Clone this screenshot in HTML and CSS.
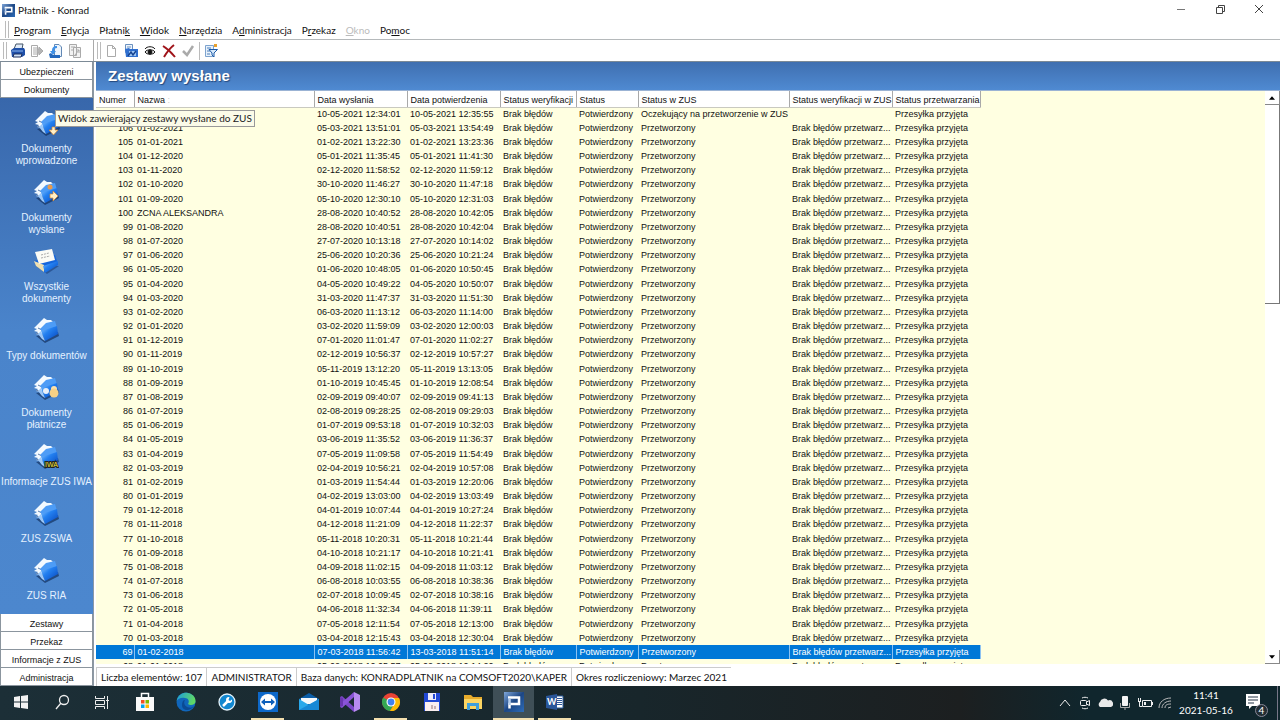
FILE: index.html
```html
<!DOCTYPE html>
<html lang="pl">
<head>
  <meta charset="UTF-8" />
  <meta name="viewport" content="width=device-width, initial-scale=1.0"/>
  <title>Płatnik - Konrad</title>
  <link rel="stylesheet" href="styles.css">
</head>
<body>
  <!-- shared shapes -->
  <svg class="defs" width="0" height="0" aria-hidden="true">
    <defs>
      <linearGradient id="blueFace" x1="0" y1="0" x2="1" y2="1">
        <stop offset="0" stop-color="#8fcaff"/>
        <stop offset="0.4" stop-color="#2380f0"/>
        <stop offset="1" stop-color="#0544bc"/>
      </linearGradient>
      <linearGradient id="pFace" x1="0" y1="0" x2="1" y2="1">
        <stop offset="0" stop-color="#7fa6d8"/>
        <stop offset="0.5" stop-color="#1c4684"/>
        <stop offset="1" stop-color="#2e6cb8"/>
      </linearGradient>
      <linearGradient id="edgeFace" x1="0" y1="0" x2="1" y2="0.3">
        <stop offset="0" stop-color="#1a9be0"/>
        <stop offset="1" stop-color="#5fd765"/>
      </linearGradient>
      <symbol id="folder" viewBox="0 0 26 26">
        <path d="M3 19 12 26 26 19 25 15Z" fill="#12305f" opacity=".7"/>
        <path d="M1 11 11 1 14 3 18 3 22 7 8 18 3 17 5 15 1 14 4 12Z" fill="#f4faff"/>
        <path d="M3 16 8 18M5 11 9 13" stroke="#5b7cab" stroke-width="1"/>
        <path d="M7 12 13 6 22 4 24 11 10 16Z" fill="#4d9cf6"/>
        <path d="M8 14 24 9 25 17 12 24Z" fill="url(#blueFace)"/>
        <path d="M5 17 8 14 12 24 9 22Z" fill="#9cc8f8"/>
      </symbol>
      <symbol id="logoP" viewBox="0 0 20 20">
        <rect width="20" height="20" fill="url(#pFace)"/>
        <path d="M5.500 16.500V12H15V5.500H4" fill="none" stroke="#fff" stroke-width="2.500"/>
        <path d="M5.500 6V13" stroke="#b9cfec" stroke-width="2.500"/>
      </symbol>
    </defs>
  </svg>

  <div class="window">
    <header class="titlebar">
      <svg class="title-icon" viewBox="0 0 20 20"><use href="#logoP"/></svg>
      <h1>Płatnik - Konrad</h1>
      <div class="window-buttons">
        <button type="button" aria-label="Minimalizuj"><svg viewBox="0 0 10 10"><path d="M1 5.500H9" stroke="#777"/></svg></button>
        <button type="button" aria-label="Przywróć"><svg viewBox="0 0 10 10"><path d="M1.500 3.500H7.500V9.500H1.500ZM3.500 3.500V1.500H9.500V7.500H7.500" fill="none" stroke="#444"/></svg></button>
        <button type="button" aria-label="Zamknij"><svg viewBox="0 0 10 10"><path d="M1 1 9 9M9 1 1 9" stroke="#444"/></svg></button>
      </div>
    </header>

    <nav class="menu">
      <span class="grip"></span>
      <button type="button"><u>P</u>rogram</button>
      <button type="button"><u>E</u>dycja</button>
      <button type="button">Płatni<u>k</u></button>
      <button type="button"><u>W</u>idok</button>
      <button type="button"><u>N</u>arzędzia</button>
      <button type="button">A<u>d</u>ministracja</button>
      <button type="button">P<u>r</u>zekaz</button>
      <button type="button" disabled><u>O</u>kno</button>
      <button type="button">Po<u>m</u>oc</button>
    </nav>

    <div class="toolbar">
      <div class="tools tools-left">
        <span class="grip"></span>
        <button type="button" aria-label="Drukuj">
          <svg viewBox="0 0 16 16"><path d="M4 6 6 1H13L12 6" fill="#dfeaf8" stroke="#456"/><path d="M1 7 4 5H14L15 7V12L12 14H2Z" fill="#1f4fa8"/><path d="M2 8H13" stroke="#8db8f0"/><path d="M4 11H12L11 14H3Z" fill="#cfe0f5" stroke="#1c2f5c"/></svg>
        </button>
        <button type="button" aria-label="Eksport">
          <svg viewBox="0 0 16 16" fill="none" stroke="#aaa"><path d="M2.500 2.500H8.500V13.500H2.500ZM4 5H8M4 7H7M4 9H7M4 11H8"/><path d="M8 6H10V4L14 8 10 12V10H8Z" fill="#b5b5b5"/></svg>
        </button>
        <button type="button" aria-label="Import">
          <svg viewBox="0 0 16 16"><path d="M6.500 1.500H11L13.500 4V13.500H6.500Z" fill="#edf5fd" stroke="#6288b5"/><path d="M1 11 3 10 5 12H12V15H2Z" fill="#2368bd"/><path d="M9 3C5 3 4 5 4 8H2L5 12 8 8H6C6 6 7 5 9 5Z" fill="#3f91e8"/></svg>
        </button>
        <button type="button" aria-label="Kopiuj">
          <svg viewBox="0 0 16 16" fill="none" stroke="#aaa"><path d="M2.500 1.500H9.500V12.500H2.500ZM6.500 4.500H13.500V14.500H6.500Z" fill="#f2f2f2"/><path d="M4 4H8M4 7H6M8 12 12 7M9 7H12V10"/></svg>
        </button>
      </div>
      <div class="tools">
        <span class="grip"></span>
        <button type="button" aria-label="Nowy">
          <svg viewBox="0 0 16 16"><path d="M3.500 2.500H8.500L11.500 5.500V13.500H3.500ZM8.500 2.500V5.500H11.500" fill="#fff" stroke="#aaa"/></svg>
        </button>
        <button type="button" aria-label="Otwórz">
          <svg viewBox="0 0 16 16"><path d="M2.500 1.500H9.500V9.500H2.500Z" fill="#edf4fc" stroke="#6b91bf"/><path d="M4 4H8" stroke="#6b91bf"/><path d="M2 6 6 5 7 6H15V14H3Z" fill="#2f6fd0"/><path d="M6 8H13V13H6Z" fill="#9cc6f5"/><path d="M5 13 8 9 10 12 13 8" stroke="#164391" stroke-width="1.500" fill="none"/></svg>
        </button>
        <button type="button" aria-label="Podgląd">
          <svg viewBox="0 0 16 16" fill="none" stroke="#111"><path d="M3 6C5 3 11 3 13 6M3 9C5 6 11 6 13 9 11 12 5 12 3 9"/><circle cx="8" cy="9" r="2" fill="#111"/></svg>
        </button>
        <button type="button" aria-label="Usuń">
          <svg viewBox="0 0 16 16" fill="none" stroke="#a0141a" stroke-width="2"><path d="M2 3C7 6 10 9 14 14M13 2C9 5 6 9 3 14"/></svg>
        </button>
        <button type="button" aria-label="Zatwierdź">
          <svg viewBox="0 0 16 16" fill="none" stroke="#aaa" stroke-width="2.500"><path d="M3 8 7 12 13 3"/></svg>
        </button>
        <span class="separator"></span>
        <button type="button" aria-label="Filtr">
          <svg viewBox="0 0 16 16"><path d="M2.500 2.500H10.500V13.500H2.500Z" fill="#e8f2fc" stroke="#7da3ce"/><path d="M4 5H8M4 8H7M4 11H7" stroke="#4d7fb8"/><path d="M6 6.500H14.500L11 10V14L9 12V10Z" fill="#d5e9fc" stroke="#1d5ba8"/><path d="M11 1H14V4H11Z" fill="#eaa12d"/></svg>
        </button>
      </div>
    </div>

    <div class="workspace">
      <aside class="sidebar">
        <button type="button" class="section">Ubezpieczeni</button>
        <button type="button" class="section">Dokumenty</button>
        <div class="shortcuts">
          <button type="button" class="shortcut">
            <svg viewBox="0 0 26 26"><use href="#folder"/><path d="M18 17H21V20H24L19.500 25 15 20H18Z" fill="#fff0c8" stroke="#d88a30" stroke-width=".7"/></svg>
            Dokumenty<br>wprowadzone
          </button>
          <button type="button" class="shortcut">
            <svg viewBox="0 0 26 26"><use href="#folder"/><circle cx="17" cy="8" r="2.500" fill="#e99a4c"/><path d="M17 15H20V12L25 17 20 22V19H17Z" fill="#fff0c8" stroke="#d88a30" stroke-width=".7"/></svg>
            Dokumenty<br>wysłane
          </button>
          <button type="button" class="shortcut">
            <svg viewBox="0 0 26 26"><path d="M3 18 14 26 26 18Z" fill="#1c3f78" opacity=".6"/><path d="M1 13 22 7 25 16 11 24Z" fill="#1565dc"/><path d="M1 13 11 17 11 24 3 18Z" fill="#f0e0b0"/><path d="M2 4 19 1 22 12 6 16Z" fill="#fbfbf5"/><path d="M8 7 16 5M8 10 17 8" stroke="#aaa" stroke-dasharray="2 1"/><path d="M10 18 25 13 25 17 12 25Z" fill="url(#blueFace)"/></svg>
            Wszystkie<br>dokumenty
          </button>
          <button type="button" class="shortcut">
            <svg viewBox="0 0 26 26"><use href="#folder"/></svg>
            Typy dokumentów
          </button>
          <button type="button" class="shortcut">
            <svg viewBox="0 0 26 26"><use href="#folder"/><circle cx="13" cy="17" r="3" fill="#e8eff8"/><circle cx="21" cy="15" r="3" fill="#fbe2ae"/><circle cx="21" cy="19" r="4.500" fill="#f7d185"/></svg>
            Dokumenty<br>płatnicze
          </button>
          <button type="button" class="shortcut">
            <svg viewBox="0 0 26 26"><use href="#folder"/><text class="iwa" x="12" y="24">IWA</text></svg>
            Informacje ZUS IWA
          </button>
          <button type="button" class="shortcut">
            <svg viewBox="0 0 26 26"><use href="#folder"/></svg>
            ZUS ZSWA
          </button>
          <button type="button" class="shortcut">
            <svg viewBox="0 0 26 26"><use href="#folder"/></svg>
            ZUS RIA
          </button>
        </div>
        <button type="button" class="section">Zestawy</button>
        <button type="button" class="section">Przekaz</button>
        <button type="button" class="section">Informacje z ZUS</button>
        <button type="button" class="section">Administracja</button>
        <div class="tooltip" role="tooltip">Widok zawierający zestawy wysłane do ZUS</div>
      </aside>

      <main class="content">
        <h2>Zestawy wysłane</h2>
        <div class="list">
          <div class="list-body">
            <table>
              <colgroup>
                <col class="c-nr"><col class="c-name"><col class="c-sent"><col class="c-conf"><col class="c-ver">
                <col class="c-status"><col class="c-zus"><col class="c-verzus"><col class="c-proc">
              </colgroup>
              <thead>
                <tr>
                  <th>Numer</th>
                  <th>Nazwa <span class="sort">:</span></th>
                  <th>Data wysłania</th>
                  <th>Data potwierdzenia</th>
                  <th>Status weryfikacji</th>
                  <th>Status</th>
                  <th>Status w ZUS</th>
                  <th>Status weryfikacji w ZUS</th>
                  <th>Status przetwarzania</th>
                </tr>
              </thead>
              <tbody id="rows"></tbody>
            </table>
          </div>
          <div class="scrollbar">
            <button type="button" class="scroll-btn" aria-label="W górę"><svg viewBox="0 0 7 4"><path d="M0 4 3.500 0 7 4Z"/></svg></button>
            <div class="thumb"></div>
            <button type="button" class="scroll-btn" aria-label="W dół"><svg viewBox="0 0 7 4"><path d="M0 0 3.500 4 7 0Z"/></svg></button>
          </div>
        </div>
        <footer class="statusbar">
          <span>Liczba elementów: 107</span>
          <span>ADMINISTRATOR</span>
          <span>Baza danych: KONRADPLATNIK na COMSOFT2020\KAPER</span>
          <span>Okres rozliczeniowy: Marzec 2021</span>
        </footer>
      </main>
    </div>
  </div>

  <div class="taskbar">
    <button type="button" aria-label="Start"><svg viewBox="0 0 20 20" fill="#f2f2f2"><path d="M2 5 8 4V9.500H2ZM9 4 16 3V9.500H9ZM2 10.500H8V16L2 15ZM9 10.500H16V17L9 16Z"/></svg></button>
    <button type="button" aria-label="Szukaj"><svg viewBox="0 0 20 20" fill="none" stroke="#eee" stroke-width="1.300"><circle cx="11" cy="8" r="4.500"/><path d="M8 11 3 17"/></svg></button>
    <button type="button" aria-label="Widok zadań"><svg viewBox="0 0 20 20" fill="none" stroke="#eee"><path d="M1.500 4V6.500H10.500V4M1.500 8.500H10.500V12.500H1.500ZM1.500 17V14.500H10.500V17M13.500 4V17M12 8.500H15"/></svg></button>
    <button type="button" aria-label="Sklep"><svg viewBox="0 0 20 20"><path d="M6.500 6V1.500H13.500V6" fill="none" stroke="#fff" stroke-width="1.500"/><path d="M1 5H19V19H1Z" fill="#fafafa"/><path d="M6 8H9.500V11.500H6Z" fill="#f25022"/><path d="M10.500 8H14V11.500H10.500Z" fill="#7fba00"/><path d="M6 12.500H9.500V16H6Z" fill="#00a4ef"/><path d="M10.500 12.500H14V16H10.500Z" fill="#ffb900"/></svg></button>
    <button type="button" aria-label="Edge"><svg viewBox="0 0 20 20"><circle cx="10" cy="10" r="9.500" fill="#1066bb"/><path d="M.5 9C2 2 8 0 12 1 18 2 20 7 19.500 10 19 13 14 14 12 12 14 9 12 6 9 6 5 5 2 7 .500 9Z" fill="url(#edgeFace)"/><path d="M9 8C7 11 9 15 13 15.500 15 16 17 15 18 14 14 20 6 19 6 13 6 10 7 8 9 8Z" fill="#0b4a94"/></svg></button>
    <button type="button" aria-label="Serwis"><svg viewBox="0 0 20 20"><circle cx="10" cy="10" r="8" fill="#1287d0" stroke="#e5f3fb" stroke-width="1.300"/><path d="M6 14 11 9" stroke="#fff" stroke-width="2.500"/><path d="M15 7.500A3 3 0 1 1 12.500 5L11.500 8 13 9Z" fill="#fff"/></svg></button>
    <button type="button" class="running" aria-label="TeamViewer"><svg viewBox="0 0 20 20"><rect width="20" height="20" fill="#0d68c9"/><circle cx="10" cy="10" r="8" fill="#fff"/><path d="M3 10 7 6.500V9H13V6.500L17 10 13 13.500V11H7V13.500Z" fill="#0d5fbb"/></svg></button>
    <button type="button" aria-label="Poczta"><svg viewBox="0 0 20 20"><path d="M0 7 10 1 20 7V18H0Z" fill="#0c5ea8"/><path d="M2 6H18V12H2Z" fill="#f5f8fa"/><path d="M0 7 10 13 20 7V18H0Z" fill="#29a8ea"/><path d="M0 18 20 7V18Z" fill="#1688d6"/></svg></button>
    <button type="button" aria-label="Visual Studio"><svg viewBox="0 0 20 20"><path d="M14 0 20 3V17L14 20Z" fill="#b88bf0"/><path d="M0 5 2 4 14 15V20L0 8Z" fill="#7b48c8"/><path d="M0 15 2 16 14 5V0L0 12Z" fill="#8b54d8"/><path d="M0 5 3 6V14L0 15Z" fill="#6a35b0"/></svg></button>
    <button type="button" class="running" aria-label="Chrome"><svg viewBox="0 0 20 20"><circle cx="10" cy="10" r="9" fill="#e94335"/><path d="M10 10 2.200 5.500A9 9 0 0 0 9 19L13 12Z" fill="#34a853"/><path d="M10 6H18A9 9 0 0 1 9 19L14 11Z" fill="#fbbc05"/><circle cx="10" cy="10" r="4.500" fill="#fff"/><circle cx="10" cy="10" r="3.400" fill="#3f82ee"/></svg></button>
    <button type="button" aria-label="Total Commander"><svg viewBox="0 0 20 20"><path d="M2 1H18V19H2Z" fill="#2148d4"/><path d="M6 1H14V8H6Z" fill="#ecebfa"/><path d="M11 2H13V7H11Z" fill="#2148d4"/><path d="M3 10H17V19H3Z" fill="#fbeef0"/><path d="M9 14H11M9 16H11M13 14V17" stroke="#977"/></svg></button>
    <button type="button" aria-label="Eksplorator"><svg viewBox="0 0 20 20"><path d="M1 3H8L10 5H19V17H1Z" fill="#e8ac2c"/><path d="M1 7H19V17H1Z" fill="#fcd562"/><path d="M4 11H16V18H13V14H7V18H4Z" fill="#3f9fdd"/></svg></button>
    <button type="button" class="running active" aria-label="Płatnik"><svg viewBox="0 0 20 20"><use href="#logoP"/></svg></button>
    <button type="button" class="running" aria-label="Word"><svg viewBox="0 0 20 20"><path d="M10 4H18V16H10Z" fill="#fff" stroke="#285a9c"/><path d="M11 6.500H17M11 8.500H17M11 10.500H17M11 12.500H17" stroke="#2a5699"/><path d="M1 4 12 2V18L1 16Z" fill="#2a5699"/><text class="word-w" x="2" y="13">W</text></svg></button>

    <div class="tray">
      <button type="button" aria-label="Ukryte ikony"><svg viewBox="0 0 16 16" fill="none" stroke="#eee"><path d="M3 11 8 5 13 11"/></svg></button>
      <button type="button" aria-label="Kamera"><svg viewBox="0 0 16 16" fill="none" stroke="#eee"><rect x="3.500" y="5.500" width="6" height="5" rx="1"/><path d="M9.500 7 12.500 5.500V10.500L9.500 9M5 3C7 2 9 2 11 3M5 13C7 14 9 14 11 13"/></svg></button>
      <button type="button" aria-label="OneDrive"><svg viewBox="0 0 16 16"><path d="M3 12A3 3 0 0 1 3 7 4.500 4.500 0 0 1 11 5.500 3.500 3.500 0 0 1 14 12Z" fill="#e8e8e8"/></svg></button>
      <button type="button" aria-label="Mikrofon"><svg viewBox="0 0 16 16"><rect x="5" y="1" width="6" height="10" rx="1" fill="#f5f5f5"/><path d="M3.500 8V12.500H12.500V8M8 12V15" fill="none" stroke="#aaa"/></svg></button>
      <button type="button" aria-label="Bateria"><svg viewBox="0 0 16 16"><path d="M5.500 5.500H14.500V11.500H5.500ZM15.500 7V10M1.500 3V6M3.500 3V6M1 6.500H4M2.500 7V11.500H5" fill="none" stroke="#eee"/><path d="M7 7H9V10H7Z" fill="#eee"/></svg></button>
      <button type="button" aria-label="Sieć"><svg viewBox="0 0 16 16" fill="none" stroke="#bbb"><path d="M2 13C2 7 7 3 14 3M5 13C5 9 9 6 14 6M8 13C8 10 10 9 14 9M11 13 14 12"/></svg></button>
      <div class="clock"><span>11:41</span><span>2021-05-16</span></div>
      <button type="button" class="notices" aria-label="Powiadomienia">
        <svg viewBox="0 0 24 24"><path d="M2 3H16V15H8L5 18V15H2Z" fill="#fff"/><path d="M4 6H14M4 9H14M4 12H10" stroke="#234"/></svg>
        <span class="badge">4</span>
      </button>
      <span class="desktop-edge"></span>
    </div>
  </div>

  <script src="script.js"></script>
</body>
</html>
```

FILE: styles.css
```css
* {
  box-sizing: border-box;
}

body {
  margin: 0;
  height: 100vh;
  display: flex;
  flex-direction: column;
  overflow: hidden;
  background-color: #fff;
  color: #111;
  font-family: Lato, "Noto Sans", sans-serif;
  font-size: 10px;
}

button {
  margin: 0;
  padding: 0;
  border: none;
  background: none;
  color: inherit;
  font: inherit;
  cursor: pointer;
}

h1,
h2 {
  margin: 0;
  font-weight: normal;
}

.defs {
  position: absolute;
}

.window {
  flex: 1;
  min-height: 0;
  display: flex;
  flex-direction: column;
}

/* title bar */
.titlebar {
  display: flex;
  align-items: center;
  height: 20px;
  padding: 0 2px;
}

.title-icon {
  width: 13px;
  height: 13px;
  margin-right: 3px;
}

.titlebar h1 {
  font-size: 10px;
}

.window-buttons {
  display: flex;
  margin-left: auto;
}

.window-buttons button {
  width: 39px;
  height: 20px;
}

.window-buttons svg {
  width: 10px;
  height: 10px;
}

/* menu + toolbar */
.menu {
  display: flex;
  align-items: center;
  gap: 10px;
  height: 20px;
  padding-left: 5px;
  border-bottom: 1px solid #b5b9bb;
}

.menu button:disabled {
  color: #bbb;
}

.grip {
  width: 4px;
  height: 17px;
  border-left: 1px solid #bbb;
  border-right: 1px solid #bbb;
}

.menu .grip {
  margin-right: -5px;
}

.toolbar {
  display: flex;
  height: 22px;
  border-bottom: 1px solid #7c8a96;
}

.tools {
  display: flex;
  align-items: center;
  gap: 3px;
  padding-left: 3px;
}

.tools-left {
  width: 94px;
  border-right: 1px solid #aaa;
}

.tools button {
  width: 16px;
  height: 16px;
}

.tools svg {
  display: block;
  width: 16px;
  height: 16px;
}

.separator {
  width: 1px;
  height: 18px;
  background-color: #bbb;
}

.workspace {
  flex: 1;
  min-height: 0;
  display: flex;
}

/* sidebar */
.sidebar {
  position: relative;
  display: flex;
  flex-direction: column;
  width: 94px;
  border-right: 1px solid #8d99a5;
  font-family: "Liberation Sans", Arial, sans-serif;
}

.section {
  height: 18px;
  padding-top: 2px;
  border-bottom: 1px solid #8b959e;
  border-left: 1px solid #8b959e;
  border-right: 1px solid #8b959e;
  background-color: #fff;
  font-size: 9px;
}

.shortcuts {
  flex: 1;
  display: flex;
  flex-direction: column;
  align-items: center;
  gap: 12px;
  min-height: 0;
  padding-top: 12px;
  overflow: hidden;
  background: linear-gradient(#3867ab, #4a84cb 45%, #4c87ce);
  color: #e4f1ff;
}

.shortcut {
  line-height: 12px;
  white-space: nowrap;
}

.shortcut svg {
  display: block;
  width: 26px;
  height: 26px;
  margin: 0 auto 7px;
}

.iwa {
  fill: #f2e53a;
  stroke: #222;
  stroke-width: 2px;
  paint-order: stroke;
  font-size: 7px;
}

.tooltip {
  position: absolute;
  z-index: 1;
  top: 48px;
  left: 55px;
  padding: 0 2px;
  border: 1px solid #999;
  background-color: #fbfbe8;
  color: #222;
  font-family: Lato, "Noto Sans", sans-serif;
  line-height: 15px;
  white-space: nowrap;
}

/* list */
.content {
  flex: 1;
  min-width: 0;
  display: flex;
  flex-direction: column;
  padding-left: 2px;
}

.content h2 {
  height: 28px;
  padding-left: 12px;
  background: linear-gradient(#3f6fb0, #4f8ad2);
  color: #fff;
  font-family: "Liberation Sans", Arial, sans-serif;
  font-size: 15px;
  font-weight: bold;
  line-height: 27px;
  text-shadow: 1px 1px 1px #24487c;
}

.list {
  flex: 1;
  min-height: 0;
  display: flex;
  border-top: 1px solid #9bb3d4;
}

.list-body {
  flex: 1;
  overflow: hidden;
  background-color: #ffffe1;
}

table {
  width: 884px;
  border-collapse: collapse;
  table-layout: fixed;
  font-family: "Liberation Sans", Arial, sans-serif;
  font-size: 9px;
  line-height: 13px;
}

.c-nr { width: 38px; }
.c-name { width: 180px; }
.c-sent { width: 93px; }
.c-conf { width: 93px; }
.c-ver { width: 76px; }
.c-status { width: 62px; }
.c-zus { width: 151px; }
.c-verzus { width: 103px; }
.c-proc { width: 88px; }

th,
td {
  height: 14px;
  padding: 0 0 0 3px;
  text-align: left;
  white-space: nowrap;
}

th {
  height: 16px;
  padding-top: 3px;
  line-height: 12px;
  border-right: 1px solid #a9a9a9;
  border-bottom: 1px solid #c9c9c0;
  background-color: #fff;
  font-weight: normal;
}

.sort {
  color: #ccc;
}

td:first-child {
  padding-right: 1px;
  text-align: right;
}

tr:nth-child(6n) td {
  height: 15px;
}

.selected td {
  border-right: 1px solid #8cc2f2;
  background-color: #0078d7;
  color: #fff;
}

.scrollbar {
  display: flex;
  flex-direction: column;
  width: 15px;
  background-color: #fff;
}

.scroll-btn {
  height: 14px;
  border-right: 1px solid #888;
  border-bottom: 1px solid #888;
}

.scroll-btn svg {
  display: block;
  width: 6px;
  height: 4px;
  margin: 0 auto;
}

.thumb {
  height: 199px;
  margin-bottom: auto;
  border-right: 1px solid #777;
  border-bottom: 1px solid #777;
}

.statusbar {
  display: flex;
  align-items: center;
  height: 22px;
  padding-top: 2px;
}

.statusbar span {
  padding: 0 4px;
  border-top: 1px solid #ccc;
  border-left: 1px solid #ccc;
  line-height: 18px;
}

/* taskbar */
.taskbar {
  display: flex;
  height: 34px;
  padding-left: 1px;
  background: linear-gradient(90deg, #1c2f37, #18262b 50%, #1c1f20 75%, #10262d 85%);
  color: #fff;
}

.taskbar > button {
  width: 41px;
  border-bottom: 2px solid transparent;
}

.taskbar > button svg {
  display: block;
  width: 20px;
  height: 20px;
  margin: 0 auto;
}

.taskbar > .running {
  border-image: linear-gradient(90deg, transparent 4px, #f3dfae 4px, #f3dfae 37px, transparent 37px) 0 0 2 0;
}

.taskbar > .active {
  border-image: none;
  border-bottom-color: #f3dfae;
  background-color: #3f4f57;
}

.word-w {
  fill: #fff;
  font-size: 9px;
  font-weight: bold;
}

.tray {
  display: flex;
  align-items: center;
  margin-left: auto;
}

.tray button {
  width: 20px;
}

.tray svg {
  display: block;
  width: 16px;
  height: 16px;
  margin: 0 auto;
}

.clock {
  display: flex;
  flex-direction: column;
  align-items: center;
  width: 62px;
  line-height: 15px;
}

.tray .notices {
  position: relative;
  width: 24px;
  margin: 0 9px 0 7px;
}

.notices svg {
  width: 24px;
  height: 24px;
}

.badge {
  position: absolute;
  right: 0;
  bottom: -2px;
  width: 13px;
  height: 13px;
  border: 1px solid #889;
  border-radius: 50%;
  background-color: #222d33;
  line-height: 11px;
}

.desktop-edge {
  width: 3px;
  height: 34px;
  border-left: 1px solid #778;
}
```

FILE: script.js
```js
// number, name, sent, confirmed
const sets = [
  ["", "", "10-05-2021 12:34:01", "10-05-2021 12:35:55"],
  [106, "01-02-2021", "05-03-2021 13:51:01", "05-03-2021 13:54:49"],
  [105, "01-01-2021", "01-02-2021 13:22:30", "01-02-2021 13:23:36"],
  [104, "01-12-2020", "05-01-2021 11:35:45", "05-01-2021 11:41:30"],
  [103, "01-11-2020", "02-12-2020 11:58:52", "02-12-2020 11:59:12"],
  [102, "01-10-2020", "30-10-2020 11:46:27", "30-10-2020 11:47:18"],
  [101, "01-09-2020", "05-10-2020 12:30:10", "05-10-2020 12:31:03"],
  [100, "ZCNA ALEKSANDRA", "28-08-2020 10:40:52", "28-08-2020 10:42:05"],
  [99, "01-08-2020", "28-08-2020 10:40:51", "28-08-2020 10:42:04"],
  [98, "01-07-2020", "27-07-2020 10:13:18", "27-07-2020 10:14:02"],
  [97, "01-06-2020", "25-06-2020 10:20:36", "25-06-2020 10:21:24"],
  [96, "01-05-2020", "01-06-2020 10:48:05", "01-06-2020 10:50:45"],
  [95, "01-04-2020", "04-05-2020 10:49:22", "04-05-2020 10:50:07"],
  [94, "01-03-2020", "31-03-2020 11:47:37", "31-03-2020 11:51:30"],
  [93, "01-02-2020", "06-03-2020 11:13:12", "06-03-2020 11:14:00"],
  [92, "01-01-2020", "03-02-2020 11:59:09", "03-02-2020 12:00:03"],
  [91, "01-12-2019", "07-01-2020 11:01:47", "07-01-2020 11:02:27"],
  [90, "01-11-2019", "02-12-2019 10:56:37", "02-12-2019 10:57:27"],
  [89, "01-10-2019", "05-11-2019 13:12:20", "05-11-2019 13:13:05"],
  [88, "01-09-2019", "01-10-2019 10:45:45", "01-10-2019 12:08:54"],
  [87, "01-08-2019", "02-09-2019 09:40:07", "02-09-2019 09:41:13"],
  [86, "01-07-2019", "02-08-2019 09:28:25", "02-08-2019 09:29:03"],
  [85, "01-06-2019", "01-07-2019 09:53:18", "01-07-2019 10:32:03"],
  [84, "01-05-2019", "03-06-2019 11:35:52", "03-06-2019 11:36:37"],
  [83, "01-04-2019", "07-05-2019 11:09:58", "07-05-2019 11:54:49"],
  [82, "01-03-2019", "02-04-2019 10:56:21", "02-04-2019 10:57:08"],
  [81, "01-02-2019", "01-03-2019 11:54:44", "01-03-2019 12:20:06"],
  [80, "01-01-2019", "04-02-2019 13:03:00", "04-02-2019 13:03:49"],
  [79, "01-12-2018", "04-01-2019 10:07:44", "04-01-2019 10:27:24"],
  [78, "01-11-2018", "04-12-2018 11:21:09", "04-12-2018 11:22:37"],
  [77, "01-10-2018", "05-11-2018 10:20:31", "05-11-2018 10:21:44"],
  [76, "01-09-2018", "04-10-2018 10:21:17", "04-10-2018 10:21:41"],
  [75, "01-08-2018", "04-09-2018 11:02:15", "04-09-2018 11:03:12"],
  [74, "01-07-2018", "06-08-2018 10:03:55", "06-08-2018 10:38:36"],
  [73, "01-06-2018", "02-07-2018 10:09:45", "02-07-2018 10:38:16"],
  [72, "01-05-2018", "04-06-2018 11:32:34", "04-06-2018 11:39:11"],
  [71, "01-04-2018", "07-05-2018 12:11:54", "07-05-2018 12:13:00"],
  [70, "01-03-2018", "03-04-2018 12:15:43", "03-04-2018 12:30:04"],
  [69, "01-02-2018", "07-03-2018 11:56:42", "13-03-2018 11:51:14"],
  [68, "01-01-2018", "05-02-2018 10:05:57", "05-02-2018 10:14:20"]
];

const rows = document.getElementById("rows");

sets.forEach(([nr, name, sent, confirmed], i) => {
  const row = document.createElement("tr");
  if (nr === 69) row.className = "selected";
  row.innerHTML = `
    <td>${nr}</td>
    <td>${name}</td>
    <td>${sent}</td>
    <td>${confirmed}</td>
    <td>Brak błędów</td>
    <td>Potwierdzony</td>
    <td>${i === 0 ? "Oczekujący na przetworzenie w ZUS" : "Przetworzony"}</td>
    <td>${i === 0 ? "" : "Brak błędów przetwarz..."}</td>
    <td>Przesyłka przyjęta</td>
  `;
  rows.appendChild(row);
});
```
